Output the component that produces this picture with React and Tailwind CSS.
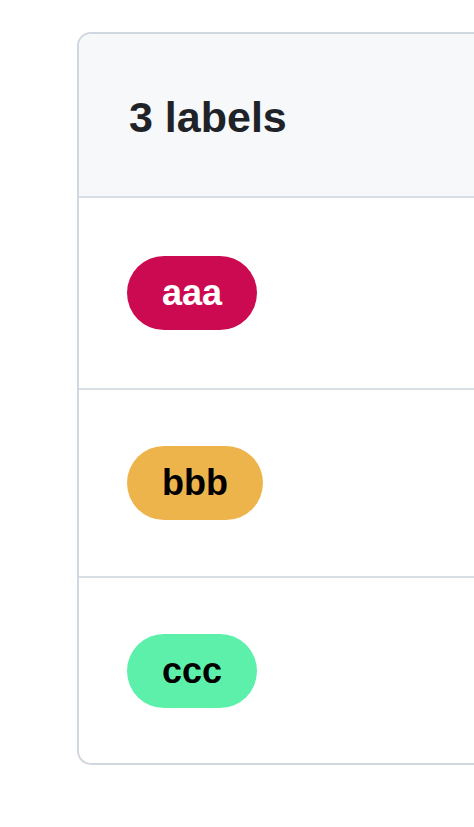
const labels = [
  { name: "aaa", bg: "bg-[#cc0a51]", text: "text-white", h: "h-[192px]" },
  { name: "bbb", bg: "bg-[#eeb44c]", text: "text-black", h: "h-[188px]" },
  { name: "ccc", bg: "bg-[#5cf0aa]", text: "text-black", h: "h-[185px]" },
];

const App = () => {
  return (
    <div
      className="w-[474px] h-[827px] overflow-hidden bg-white"
      style={{ fontFamily: "'Liberation Sans', Arial, sans-serif" }}
    >
      <div className="ml-[77px] mt-[32px] w-[600px] rounded-[14px] border-2 border-[#d0d7de] overflow-hidden">
        {/* Header */}
        <div className="h-[164px] flex items-center pl-[50px] bg-[#f6f8fa] border-b-2 border-[#d8dee4]">
          <h2 className="text-[43px] font-bold text-[#1f2328] leading-none pt-[4px]">
            3 labels
          </h2>
        </div>

        {/* Rows */}
        {labels.map((label, i) => (
          <div
            key={label.name}
            className={`${label.h} flex items-center pl-[48px] ${
              i < labels.length - 1 ? "border-b-2 border-[#d8dee4]" : ""
            }`}
          >
            <span
              className={`h-[74px] px-[35px] flex items-center rounded-full text-[36px] font-bold leading-none ${label.bg} ${label.text}`}
            >
              {label.name}
            </span>
          </div>
        ))}
      </div>
    </div>
  );
};

export default App;
